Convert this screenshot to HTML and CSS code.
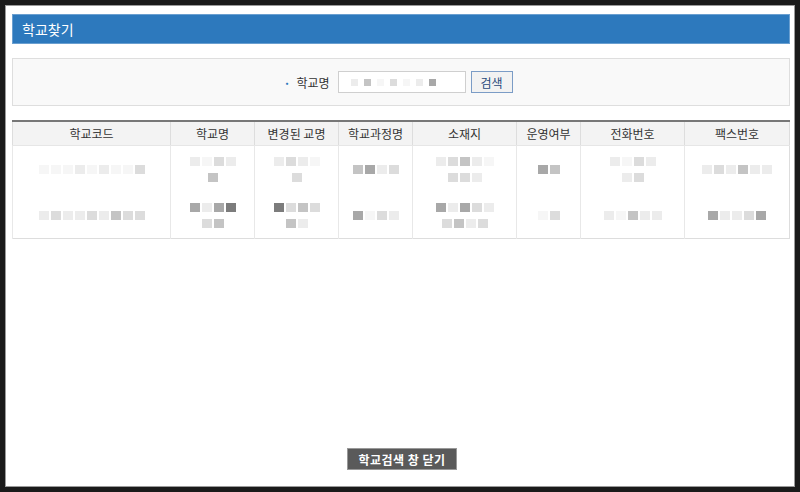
FILE: index.html
```html
<!DOCTYPE html>
<html>
	<head>
		<meta charset="UTF-8">
		<title>학교찾기</title>
		<link rel="stylesheet" href="styles.css">
	</head>
	<body>
		<div class="page">
			<h1 class="title">학교찾기</h1>
			<div class="search">
				<span class="dot">·</span>
				<label class="label">학교명</label>
				<div class="input">
					<i class="px g1"></i><i class="px g3"></i><i class="px g0"></i><i class="px g2"></i><i class="px g0"></i><i class="px g1"></i><i class="px g4"></i>
				</div>
				<button class="btn">검색</button>
			</div>
			<table class="list">
				<thead>
					<tr>
						<th class="c1">학교코드</th>
						<th class="c2">학교명</th>
						<th class="c3">변경된 교명</th>
						<th class="c4">학교과정명</th>
						<th class="c5">소재지</th>
						<th class="c6">운영여부</th>
						<th class="c7">전화번호</th>
						<th class="c8">팩스번호</th>
					</tr>
				</thead>
				<tbody>
					<tr>
						<td><span class="blur"><i class="px g0"></i><i class="px g0"></i><i class="px g0"></i><i class="px g1"></i><i class="px g0"></i><i class="px g1"></i><i class="px g0"></i><i class="px g0"></i><i class="px g2"></i></span></td>
						<td><span class="blur"><i class="px g1"></i><i class="px g0"></i><i class="px g2"></i><i class="px g1"></i></span><br><span class="blur"><i class="px g3"></i></span></td>
						<td><span class="blur"><i class="px g1"></i><i class="px g2"></i><i class="px g1"></i><i class="px g0"></i></span><br><span class="blur"><i class="px g2"></i></span></td>
						<td><span class="blur"><i class="px g3"></i><i class="px g4"></i><i class="px g1"></i><i class="px g2"></i></span></td>
						<td><span class="blur"><i class="px g1"></i><i class="px g2"></i><i class="px g3"></i><i class="px g1"></i><i class="px g0"></i></span><br><span class="blur"><i class="px g2"></i><i class="px g2"></i><i class="px g1"></i></span></td>
						<td><span class="blur"><i class="px g4"></i><i class="px g3"></i></span></td>
						<td><span class="blur"><i class="px g1"></i><i class="px g0"></i><i class="px g2"></i><i class="px g1"></i></span><br><span class="blur"><i class="px g1"></i><i class="px g2"></i></span></td>
						<td><span class="blur"><i class="px g1"></i><i class="px g2"></i><i class="px g1"></i><i class="px g3"></i><i class="px g1"></i><i class="px g1"></i></span></td>
					</tr>
					<tr>
						<td><span class="blur"><i class="px g1"></i><i class="px g2"></i><i class="px g1"></i><i class="px g1"></i><i class="px g2"></i><i class="px g1"></i><i class="px g3"></i><i class="px g2"></i><i class="px g2"></i></span></td>
						<td><span class="blur"><i class="px g4"></i><i class="px g1"></i><i class="px g4"></i><i class="px g5"></i></span><br><span class="blur"><i class="px g2"></i><i class="px g3"></i></span></td>
						<td><span class="blur"><i class="px g5"></i><i class="px g2"></i><i class="px g3"></i><i class="px g2"></i></span><br><span class="blur"><i class="px g3"></i><i class="px g1"></i></span></td>
						<td><span class="blur"><i class="px g4"></i><i class="px g0"></i><i class="px g2"></i><i class="px g1"></i></span></td>
						<td><span class="blur"><i class="px g4"></i><i class="px g1"></i><i class="px g4"></i><i class="px g2"></i><i class="px g1"></i></span><br><span class="blur"><i class="px g2"></i><i class="px g3"></i><i class="px g1"></i><i class="px g2"></i></span></td>
						<td><span class="blur"><i class="px g0"></i><i class="px g2"></i></span></td>
						<td><span class="blur"><i class="px g1"></i><i class="px g0"></i><i class="px g3"></i><i class="px g1"></i><i class="px g1"></i></span></td>
						<td><span class="blur"><i class="px g4"></i><i class="px g1"></i><i class="px g1"></i><i class="px g2"></i><i class="px g4"></i></span></td>
					</tr>
				</tbody>
			</table>
			<div class="foot">
				<button class="close">학교검색 창 닫기</button>
			</div>
		</div>
	</body>
</html>
```

FILE: styles.css
```css
html{
	background: #1a1a1a;
	height: 100%;
}
body{
	margin: 5px;
	height: 480px;
	border: 1px solid #9a9a9a;
	background: #fff;
	font: 12px "Noto Sans CJK KR", "Liberation Sans", sans-serif;
	color: #333;
	overflow: hidden;
}
.page{
	height: 100%;
	padding: 8px 4px 0 6px;
	box-sizing: border-box;
	display: flex;
	flex-direction: column;
}
.title{
	margin: 0;
	height: 30px;
	line-height: 28px;
	padding: 0 9px;
	box-sizing: border-box;
	background: #2d79bd;
	border: 1px solid #6a9fd0;
	color: #fff;
	font-size: 14px;
	font-weight: normal;
}
.search{
	margin-top: 14px;
	height: 48px;
	box-sizing: border-box;
	border: 1px solid #dedede;
	background: #f9f9f9;
	display: flex;
	align-items: center;
	justify-content: center;
	padding-right: 6px;
}
.dot{
	color: #2d79bd;
	font-weight: bold;
	margin-right: 6px;
}
.label{
	margin-right: 8px;
}
.input{
	width: 128px;
	height: 22px;
	box-sizing: border-box;
	border: 1px solid #cfcfcf;
	background: #fff;
	display: flex;
	align-items: center;
	padding-left: 9px;
}
.btn{
	margin-left: 5px;
	height: 22px;
	width: 42px;
	padding: 0;
	border: 1px solid #7b9cc6;
	background: #f2f2f2;
	color: #27497a;
	font: 12px "Noto Sans CJK KR", sans-serif;
}
.list{
	margin-top: 14px;
	width: 778px;
	border-collapse: collapse;
	border-top: 2px solid #777;
	border-bottom: 1px solid #ddd;
	border-left: 1px solid #ddd;
	border-right: 1px solid #ddd;
	table-layout: fixed;
}
.list th{
	height: 23px;
	background: #f3f3f3;
	font-weight: normal;
	color: #333;
	border-left: 1px solid #ddd;
	border-bottom: 1px solid #e6e6e6;
	padding: 0;
}
.list td{
	height: 46px;
	text-align: center;
	border-left: 1px solid #e8e8e8;
	padding: 0;
	line-height: 16px;
}
.c1{ width: 157px; }
.c2{ width: 83px; }
.c3{ width: 83px; }
.c4{ width: 73px; }
.c5{ width: 103px; }
.c6{ width: 63px; }
.c7{ width: 103px; }
.blur{
	display: inline-flex;
	align-items: center;
}
.px{
	display: inline-block;
	width: 10px;
	height: 9px;
	margin: 0 1px;
}
.input .px{
	width: 7px;
	height: 7px;
	margin: 0 3px;
}
.g0{ background: #f6f6f6; }
.g1{ background: #ececec; }
.g2{ background: #dcdcdc; }
.g3{ background: #c4c4c4; }
.g4{ background: #a8a8a8; }
.g5{ background: #7c7c7c; }
.foot{
	margin-top: auto;
	padding-bottom: 16px;
	text-align: center;
}
.close{
	height: 22px;
	padding: 0 10px;
	margin-left: 2px;
	background: #5a5a5a;
	border: 1px solid #999;
	color: #fff;
	font: bold 12px "Noto Sans CJK KR", sans-serif;
	letter-spacing: 0.5px;
}
```
